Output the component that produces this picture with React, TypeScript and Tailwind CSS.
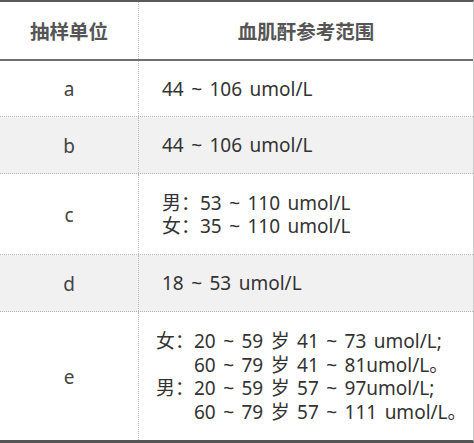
import React from 'react';

const font = { fontFamily: '"Noto Sans", "Noto Sans CJK SC", sans-serif' };

interface Row {
  key: string;
  lines: string[];
  h: string;
  shade: boolean;
  pad?: string;
}

const rows: Row[] = [
  { key: 'a', lines: ['44 ~ 106 umol/L'], h: 'h-[56px]', shade: false },
  { key: 'b', lines: ['44 ~ 106 umol/L'], h: 'h-[57px]', shade: true },
  { key: 'c', lines: ['男：53 ~ 110 umol/L', '女：35 ~ 110 umol/L'], h: 'h-[81px]', shade: false },
  { key: 'd', lines: ['18 ~ 53 umol/L'], h: 'h-[57px]', shade: true },
  {
    key: 'e',
    lines: [
      '女：20 ~ 59 岁 41 ~ 73 umol/L;',
      '\u3000\u300060 ~ 79 岁 41 ~ 81umol/L。',
      '男：20 ~ 59 岁 57 ~ 97umol/L;',
      '\u3000\u300060 ~ 79 岁 57 ~ 111 umol/L。',
    ],
    h: 'h-[128px]',
    shade: false,
    pad: 'pl-[17px]',
  },
];

export default function App() {
  return (
    <div className="w-[474px] h-[443px] bg-white overflow-hidden" style={font}>
      <div className="border-t-2 border-b-[3px] border-t-[#5a5a5a] border-b-[#555] border-r border-r-[#ccc] w-[474px]">
        <div className="grid grid-cols-[139px_1fr] h-[59px] border-b-2 border-[#707070]">
          <div className="flex items-center justify-center pt-[3px] border-r border-dotted border-[#bbb] text-[19.5px] font-bold text-[#555]">
            抽样单位
          </div>
          <div className="flex items-center justify-center pt-[3px] text-[19.5px] font-bold text-[#555]">
            血肌酐参考范围
          </div>
        </div>
        {rows.map((r, i) => (
          <div
            key={r.key}
            className={`grid grid-cols-[139px_1fr] ${r.h} ${r.shade ? 'bg-[#f1f1f1]' : 'bg-white'} ${
              i < rows.length - 1 ? 'border-b border-dotted border-[#b5b5b5]' : ''
            }`}
          >
            <div className="flex items-center justify-center pt-[2px] border-r border-dotted border-[#bbb] text-[19px] text-[#444]">
              {r.key}
            </div>
            <div
              className={`flex flex-col justify-center pt-[2px] ${r.pad ?? 'pl-[23px]'} text-[19px] leading-[23.5px] [word-spacing:2.5px] text-[#333] whitespace-pre`}
            >
              {r.lines.map((l, j) => (
                <div key={j}>{l}</div>
              ))}
            </div>
          </div>
        ))}
      </div>
    </div>
  );
}
